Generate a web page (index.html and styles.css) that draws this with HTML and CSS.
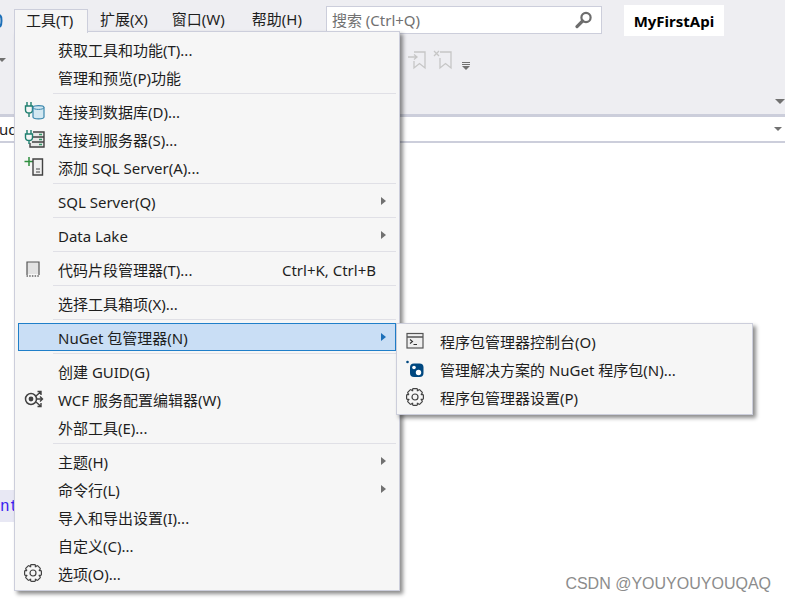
FILE: index.html
```html
<!DOCTYPE html>
<html lang="zh-CN">
<head>
<meta charset="utf-8">
<title>Visual Studio 工具菜单</title>
<link rel="stylesheet" href="styles.css">
</head>
<body>
<svg class="defs" width="0" height="0" aria-hidden="true">
  <defs>
    <g id="gear">
      <g fill="#f6f6f6" stroke="#424242" stroke-width="1.2">
        <rect x="6.6" y="0.6" width="4.8" height="16.8" rx="0.8"/>
        <rect x="6.6" y="0.6" width="4.8" height="16.8" rx="0.8" transform="rotate(45 9 9)"/>
        <rect x="6.6" y="0.6" width="4.8" height="16.8" rx="0.8" transform="rotate(90 9 9)"/>
        <rect x="6.6" y="0.6" width="4.8" height="16.8" rx="0.8" transform="rotate(135 9 9)"/>
      </g>
      <circle cx="9" cy="9" r="6.2" fill="#f6f6f6"/>
      <circle cx="9" cy="9" r="3" fill="none" stroke="#424242" stroke-width="1.2"/>
    </g>
  </defs>
</svg>
<div class="app">
  <header class="chrome">
    <div class="menubar">
      <svg class="logo-edge" width="4" height="14" viewBox="0 0 4 14"><path d="M0 1 C2 3 2 10 0 13" fill="none" stroke="#1c6fb8" stroke-width="2"/></svg>
      <div class="bar-item bar-open">工具(T)</div>
      <div class="bar-item">扩展(X)</div>
      <div class="bar-item bar-win">窗口(W)</div>
      <div class="bar-item">帮助(H)</div>
      <div class="search">
        <span class="search-text">搜索 (Ctrl+Q)</span>
        <svg width="18" height="18" viewBox="0 0 18 18"><circle cx="11" cy="6.5" r="4.6" fill="none" stroke="#6d6d6d" stroke-width="2.2"/><path d="M7.6 10 L2 15.6" stroke="#6d6d6d" stroke-width="3.2" stroke-linecap="round"/></svg>
      </div>
      <div class="project">MyFirstApi</div>
    </div>
    <div class="toolbar">
      <span class="caret caret-left"></span>
      <svg class="bm bm-first" width="20" height="20" viewBox="0 0 20 20"><path d="M7 2H18V18L12.5 13.5 7 18V11M1 7H10M7 4.500L10 7 7 9.500" fill="none" stroke="#c6c6c6" stroke-width="1.300"/></svg>
      <svg class="bm" width="20" height="20" viewBox="0 0 20 20"><path d="M7 2H18V18L12.5 13.500 7 18V8M1 1L6 6M6 1L1 6" fill="none" stroke="#c6c6c6" stroke-width="1.300"/></svg>
      <span class="overflow"><i></i><i></i><span class="caret"></span></span>
    </div>
    <div class="toolbar-end"><span class="caret caret-wide"></span></div>
  </header>
  <div class="combo">
    <span class="combo-text">ud</span>
    <span class="caret"></span>
  </div>
  <main class="editor">
    <div class="code-line">nt</div>
  </main>

  <div class="menu main-menu">
    <div class="item"><span class="ic"></span><span class="label">获取工具和功能(T)...</span></div>
    <div class="item"><span class="ic"></span><span class="label">管理和预览(P)功能</span></div>
    <div class="sep"></div>
    <div class="item"><span class="ic"><svg width="22" height="18" viewBox="0 0 22 18"><path d="M3 0V4M7 0V4M1.500 4H8.500V8C8.500 10 7 11 5 11S1.500 10 1.500 8ZM5 11V15" fill="none" stroke="#1f7f6f" stroke-width="1.400"/><path d="M9 5.500C9 3 20 3 20 5.500V15C20 17.500 9 17.500 9 15Z" fill="#d3e8f2" stroke="#3a87ad" stroke-width="1.200"/><path d="M9 5.500C9 8 20 8 20 5.500" fill="none" stroke="#3a87ad"/></svg></span><span class="label">连接到数据库(D)...</span></div>
    <div class="item"><span class="ic"><svg width="22" height="20" viewBox="0 0 22 20"><path d="M9 3H20V18H6V14" fill="#e8e8e8" stroke="#424242" stroke-width="1.400"/><path d="M9 8H20M8 13H20" stroke="#424242" stroke-width="1.400"/><path d="M15 5.500H18M15 10.500H18M15 15.500H18" stroke="#339966" stroke-width="1.600"/><path d="M3 1V5M7 1V5M1.500 5H8.500V8.500C8.500 10.500 7 11.500 5 11.500S1.500 10.500 1.500 8.500ZM5 11.500V15" fill="#f6f6f6" stroke="#1f7f6f" stroke-width="1.400"/></svg></span><span class="label">连接到服务器(S)...</span></div>
    <div class="item item-add"><span class="ic"><svg width="22" height="20" viewBox="0 0 22 20"><path d="M5 0V9M0.500 4.500H9.500" stroke="#2f8f3f" stroke-width="1.500"/><path d="M9 2H18.500V18H9Z" fill="#efefef" stroke="#424242" stroke-width="1.400"/><path d="M12 12H16M12 15H16" stroke="#424242"/></svg></span><span class="label">添加 SQL Server(A)...</span></div>
    <div class="sep"></div>
    <div class="item"><span class="ic"></span><span class="label">SQL Server(Q)</span><span class="arrow"></span></div>
    <div class="sep"></div>
    <div class="item"><span class="ic"></span><span class="label">Data Lake</span><span class="arrow"></span></div>
    <div class="sep"></div>
    <div class="item"><span class="ic"><svg width="18" height="18" viewBox="0 0 18 18"><path d="M3 14V2H15V14" fill="#e2e2e2"/><path d="M3 15V2H15V15" fill="none" stroke="#555" stroke-width="1.200"/><path d="M2.500 16H16" stroke="#666" stroke-width="1.400" stroke-dasharray="1.500 1.200"/></svg></span><span class="label">代码片段管理器(T)...</span><span class="key">Ctrl+K, Ctrl+B</span></div>
    <div class="sep"></div>
    <div class="item"><span class="ic"></span><span class="label">选择工具箱项(X)...</span></div>
    <div class="sep"></div>
    <div class="item item-on"><span class="ic"></span><span class="label">NuGet 包管理器(N)</span><span class="arrow"></span></div>
    <div class="sep"></div>
    <div class="item"><span class="ic"></span><span class="label">创建 GUID(G)</span></div>
    <div class="item"><span class="ic"><svg width="20" height="18" viewBox="0 0 20 18"><circle cx="7" cy="9" r="5.500" fill="none" stroke="#424242" stroke-width="1.500"/><circle cx="7" cy="9" r="2.400" fill="#424242"/><path d="M12 6L16.500 2M13.500 1.500H17V5M13 9H18.500M16 6.500L18.500 9 16 11.500M12 12L16.500 16M13.500 16.500H17V13" fill="none" stroke="#424242" stroke-width="1.400"/></svg></span><span class="label">WCF 服务配置编辑器(W)</span></div>
    <div class="item"><span class="ic"></span><span class="label">外部工具(E)...</span></div>
    <div class="sep"></div>
    <div class="item"><span class="ic"></span><span class="label">主题(H)</span><span class="arrow"></span></div>
    <div class="item"><span class="ic"></span><span class="label">命令行(L)</span><span class="arrow"></span></div>
    <div class="item"><span class="ic"></span><span class="label">导入和导出设置(I)...</span></div>
    <div class="item"><span class="ic"></span><span class="label">自定义(C)...</span></div>
    <div class="item"><span class="ic"><svg width="18" height="18" viewBox="0 0 18 18"><use href="#gear"/></svg></span><span class="label">选项(O)...</span></div>
  </div>

  <div class="menu sub-menu">
    <div class="item"><span class="ic"><svg width="18" height="18" viewBox="0 0 18 18"><rect x="1" y="1.500" width="16" height="14.500" fill="#efefef" stroke="#555" stroke-width="1.200"/><path d="M1 5H17" stroke="#555" stroke-width="1.500"/><path d="M4 7.500L6.500 9.500 4 11.500M7.500 12.500H11" fill="none" stroke="#333" stroke-width="1.100"/></svg></span><span class="label">程序包管理器控制台(O)</span></div>
    <div class="item"><span class="ic"><svg width="18" height="18" viewBox="0 0 18 18"><circle cx="1.500" cy="2" r="1.300" fill="#004880"/><rect x="4" y="3.500" width="13.500" height="13.500" rx="4" fill="#004880"/><circle cx="8" cy="7.500" r="1.800" fill="#fff"/><circle cx="12.500" cy="12.500" r="2.700" fill="#fff"/></svg></span><span class="label">管理解决方案的 NuGet 程序包(N)...</span></div>
    <div class="item"><span class="ic"><svg width="18" height="18" viewBox="0 0 18 18"><use href="#gear"/></svg></span><span class="label">程序包管理器设置(P)</span></div>
  </div>

  <div class="watermark">CSDN @YOUYOUYOUQAQ</div>
</div>
</body>
</html>
```

FILE: styles.css
```css
* { box-sizing: border-box; }
html, body { margin: 0; padding: 0; }
body {
  width: 785px;
  height: 602px;
  overflow: hidden;
  background: #fff;
  color: #1e1e1e;
  font: 15px/20px "Noto Sans", "Noto Sans CJK SC", sans-serif;
}
.defs { position: absolute; }
.app { position: relative; width: 785px; height: 602px; overflow: hidden; }

.chrome {
  height: 117px;
  background: #eeeef2;
  border-bottom: 3px solid #cccedb;
}
.menubar {
  position: relative;
  height: 36px;
  display: flex;
  align-items: flex-start;
  padding-left: 14px;
}
.logo-edge { position: absolute; left: 0; top: 14px; }
.bar-item {
  margin-top: 9px;
  height: 23px;
  line-height: 21px;
  padding: 0 12px;
  white-space: nowrap;
}
.bar-open {
  position: relative;
  z-index: 3;
  height: 24px;
  width: 74px;
  background: #f6f6f6;
  border: 1px solid #cccedb;
  border-bottom: 0;
  padding: 0 11px;
}
.bar-win { width: 80px; }
.search {
  width: 276px;
  height: 28px;
  margin-top: 6px;
  margin-left: 12px;
  background: #fff;
  border: 1px solid #cccedb;
  display: flex;
  align-items: center;
  justify-content: space-between;
  padding: 0 8px 0 5px;
  color: #717171;
}
.project {
  margin: 5px 0 0 22px;
  width: 100px;
  height: 31px;
  background: #fff;
  color: #000;
  font-weight: 700;
  line-height: 33px;
  text-align: center;
}
.toolbar {
  height: 43px;
  display: flex;
  align-items: center;
  padding-top: 4px;
}
.caret {
  display: block;
  width: 0;
  height: 0;
  border: 4px solid transparent;
  border-top: 4px solid #717171;
  border-bottom: 0;
}
.caret-left { margin-left: -2px; }
.bm-first { margin-left: 401px; }
.bm { margin-right: 6px; flex: none; }
.overflow {
  display: flex;
  flex-direction: column;
  align-items: center;
  gap: 1px;
  margin: 13px 0 0 3px;
}
.overflow i { display: block; width: 8px; height: 1px; background: #717171; }
.toolbar-end {
  display: flex;
  justify-content: flex-end;
  padding: 20px 0 0;
}
.caret-wide { border-width: 5px; border-top-width: 5px; }

.combo {
  height: 26px;
  background: #fff;
  border-bottom: 2px solid #cccedb;
  display: flex;
  align-items: center;
  justify-content: space-between;
  padding: 0 3px 0 0;
}
.combo-text { margin-left: -1px; }

.editor { padding-top: 347px; }
.code-line {
  width: 20px;
  height: 32px;
  background: #e8e8f4;
  color: #3a1ef0;
  font: 16px/34px "Liberation Mono", monospace;
  padding-left: 0;
}

.menu {
  position: absolute;
  background: #f6f6f6;
  border: 1px solid #cccedb;
  padding: 3px 3px;
  box-shadow: 3px 3px 4px rgba(0, 0, 0, .45);
}
.main-menu { left: 14px; top: 31px; width: 386px; height: 560px; z-index: 2; }
.sub-menu { left: 396px; top: 323px; width: 357px; height: 92px; z-index: 4; }
.item {
  height: 28px;
  display: flex;
  align-items: center;
  white-space: nowrap;
  border: 1px solid transparent;
}
.ic {
  flex: none;
  width: 39px;
  padding-left: 5px;
  display: flex;
  align-items: center;
  height: 18px;
}
.item-add .ic { height: 20px; }
.label { flex: 1; padding-top: 2px; }
.key { padding: 2px 19px 0 0; }
.arrow {
  width: 0;
  height: 0;
  margin-right: 9px;
  border: 4px solid transparent;
  border-left: 5px solid #717171;
  border-right: 0;
}
.item-on { background: #c9def5; border-color: #1f7fc9; }
.item-on .arrow { border-left-color: #1c6fb8; }
.sep {
  height: 6px;
  margin-left: 35px;
  padding-top: 2px;
}
.sep::before {
  content: "";
  display: block;
  height: 1px;
  background: #e0e0e6;
}

.watermark {
  position: absolute;
  right: 14px;
  top: 574px;
  z-index: 5;
  color: #8c8c8c;
  font: 16px/20px "Liberation Sans", sans-serif;
}
```
